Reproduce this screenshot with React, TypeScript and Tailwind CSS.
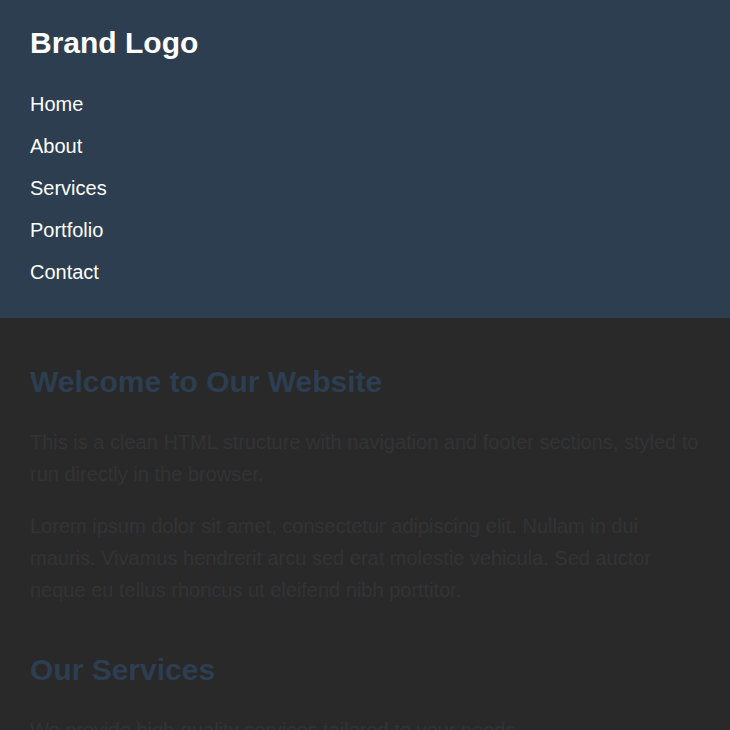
export default function App() {
    const links = ['Home', 'About', 'Services', 'Portfolio', 'Contact'];

    return (
        <div className="min-h-screen bg-[#29292a] font-['Liberation_Sans',Arial,sans-serif]">
            {/* Header / nav */}
            <header className="bg-[#2c3e50] px-[30px] pt-[25px] pb-[25px] text-white">
                <div className="text-[30px] font-bold leading-[36px]">Brand Logo</div>
                <nav className="mt-[22px]">
                    <ul>
                        {links.map((l) => (
                            <li key={l} className="h-[42px] text-[20px] leading-[42px]">
                                <a href="#">{l}</a>
                            </li>
                        ))}
                    </ul>
                </nav>
            </header>

            {/* Main content */}
            <main className="px-[30px] pt-10 pb-10">
                <section>
                    <h2 className="mb-5 text-[30px] font-bold leading-[48px] text-[#2c3e50]">
                        Welcome to Our Website
                    </h2>
                    <p className="mb-5 text-[20px] leading-[32px] text-[#333334]">
                        This is a clean HTML structure with navigation and footer sections, styled to run directly in the browser.
                    </p>
                    <p className="text-[20px] leading-[32px] text-[#333334]">
                        Lorem ipsum dolor sit amet, consectetur adipiscing elit. Nullam in dui mauris. Vivamus hendrerit arcu sed erat molestie vehicula. Sed auctor neque eu tellus rhoncus ut eleifend nibh porttitor.
                    </p>
                </section>

                <section className="mt-10">
                    <h2 className="mb-5 text-[30px] font-bold leading-[48px] text-[#2c3e50]">Our Services</h2>
                    <p className="text-[20px] leading-[32px] text-[#333334]">
                        We provide high-quality services tailored to your needs.
                    </p>
                </section>
            </main>
        </div>
    );
}
